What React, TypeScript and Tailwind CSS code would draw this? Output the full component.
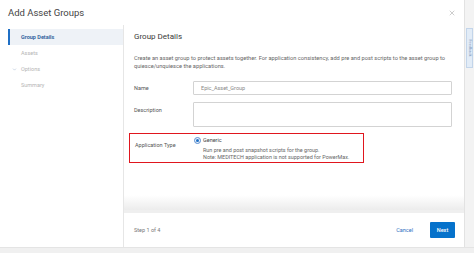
import { X, ChevronDown } from 'lucide-react';

const steps = [
  { label: 'Group Details', active: true },
  { label: 'Assets' },
  { label: 'Options', chevron: true },
  { label: 'Summary' },
];

export default function App() {
  return (
    <div className="w-[474px] h-[253px] overflow-hidden flex flex-col bg-[#f3f3f3] font-['Roboto',sans-serif] text-[#333]">
      <div className="flex flex-1 min-h-0">
        {/* dialog */}
        <div className="w-[465px] flex flex-col bg-white border-r border-[#e2e2e2]">
          <div className="h-[25px] flex items-center justify-between pl-[8px] pr-[8px]">
            <span className="text-[9.5px] text-[#444] leading-none">Add Asset Groups</span>
            <X className="w-[8px] h-[8px] text-[#9a9a9a]" strokeWidth={1.5} />
          </div>

          <div className="flex flex-1 min-h-0">
            {/* steps */}
            <div className="w-[124px] border-r border-[#e6e6e6] pt-[4px] pl-[8px]">
              {steps.map((s) => (
                <div
                  key={s.label}
                  className={
                    s.active
                      ? 'h-[16px] flex items-center bg-[#eef2f7] border-l-2 border-[#1f6fc5] pl-[11px] text-[5.5px] font-semibold text-[#2c5c99]'
                      : 'h-[16px] flex items-center pl-[13px] text-[5.5px] text-[#b5b5b5] relative'
                  }
                >
                  {s.chevron && (
                    <ChevronDown className="absolute left-[4px] w-[5px] h-[5px] text-[#8aa3c2]" strokeWidth={2} />
                  )}
                  {s.label}
                </div>
              ))}
            </div>

            {/* content */}
            <div className="flex-1 flex flex-col">
              <div className="flex-1 pl-[10px] pr-[11px] pt-[7px] bg-gradient-to-b from-white from-[92%] to-[#ececec]">
                <div className="text-[8px] leading-[10px] text-[#3a3a3a]">Group Details</div>
                <p className="mt-[12px] text-[5.7px] leading-[8px] text-[#666] whitespace-nowrap">
                  Create an asset group to protect assets together. For application consistency, add pre and post scripts to the asset group to
                  <br />
                  quiesce/unquiesce the applications.
                </p>

                <div className="mt-[11px] flex items-center">
                  <span className="w-[59px] text-[5.5px] text-[#555]">Name</span>
                  <div className="w-[259px] h-[14px] border border-[#d3d3d3] rounded-[1px] flex items-center pl-[7px] text-[5.5px] text-[#888]">
                    Epic_Asset_Group
                  </div>
                </div>

                <div className="mt-[7px] flex items-start">
                  <span className="w-[59px] pt-[4px] text-[5.5px] text-[#555]">Description</span>
                  <div className="w-[259px] h-[25px] border border-[#d3d3d3] rounded-[1px]" />
                </div>

                <div className="mt-[6px] -ml-[5px] w-[235px] h-[30px] border border-[#e0161e] flex">
                  <span className="w-[64px] pl-[5px] pt-[7px] text-[5.5px] text-[#555]">Application Type</span>
                  <div className="pt-[2px] flex flex-col">
                    <div className="flex items-center">
                      <span className="w-[7px] h-[7px] rounded-full border border-[#5b8fd1] bg-[#e6effa] flex items-center justify-center">
                        <span className="w-[3px] h-[3px] rounded-full bg-[#1f6fc5]" />
                      </span>
                      <span className="ml-[2px] text-[5.5px] text-[#444]">Generic</span>
                    </div>
                    <div className="pl-[9px] mt-[3px] text-[5.45px] leading-[7px] text-[#666] whitespace-nowrap">
                      Run pre and post snapshot scripts for the group.
                      <br />
                      Note: MEDITECH application is not supported for PowerMax.
                    </div>
                  </div>
                </div>
              </div>

              <div className="h-[3px] bg-[#efefef]" />

              <div className="h-[34px] flex items-center pl-[10px] pr-[9px] bg-white">
                <span className="text-[5.5px] text-[#777]">Step 1 of 4</span>
                <span className="ml-auto text-[5.5px] text-[#2f6fbf]">Cancel</span>
                <span className="ml-[17px] w-[25px] h-[16px] bg-[#0672cb] text-white text-[5.5px] font-medium flex items-center justify-center rounded-[1px]">
                  Next
                </span>
              </div>
            </div>
          </div>
        </div>

        {/* feedback strip */}
        <div className="flex-1 pt-[28px] pl-[1px]">
          <div className="w-[7px] h-[40px] bg-[#e2ecf7] border border-[#c3d5ea] flex items-center justify-center">
            <span className="rotate-90 whitespace-nowrap text-[4px] text-[#7d98bb]">Feedback</span>
          </div>
        </div>
      </div>
      <div className="h-[6px] bg-[#f0f0f0] border-t border-[#e4e4e4]" />
    </div>
  );
}
